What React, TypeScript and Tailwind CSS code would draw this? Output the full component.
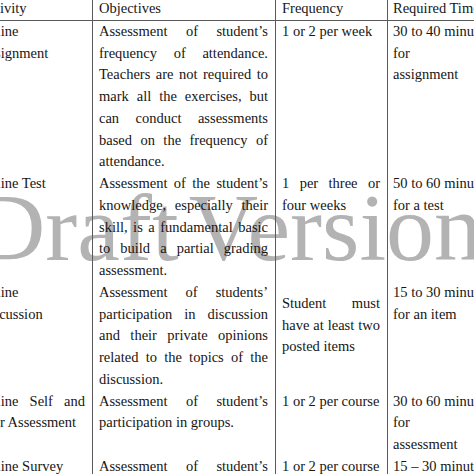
import React from "react";

type Cell = { lines: string[]; justify?: number; pad?: string };
type Row = [Cell, Cell, Cell, Cell];

const HEAD = ["Activity", "Objectives", "Frequency", "Required Time"];

const ROWS: Row[] = [
  [
    { lines: ["Online", "Assignment"] },
    {
      lines: [
        "Assessment of student’s",
        "frequency of attendance.",
        "Teachers are not required to",
        "mark all the exercises, but",
        "can conduct assessments",
        "based on the frequency of",
        "attendance.",
      ],
      justify: 6,
    },
    { lines: ["1 or 2 per week"] },
    { lines: ["30 to 40 minutes", "for", "assignment"] },
  ],
  [
    { lines: ["Online Test"] },
    {
      lines: [
        "Assessment of the student’s",
        "knowledge, especially their",
        "skill, is a fundamental basic",
        "to build a partial grading",
        "assessment.",
      ],
      justify: 4,
    },
    { lines: ["1 per three or", "four weeks"], justify: 1 },
    { lines: ["50 to 60 minutes", "for a test"] },
  ],
  [
    { lines: ["Online", "Discussion"] },
    {
      lines: [
        "Assessment of students’",
        "participation in discussion",
        "and their private opinions",
        "related to the topics of the",
        "discussion.",
      ],
      justify: 4,
    },
    { lines: ["Student must", "have at least two", "posted items"], justify: 2, pad: "pt-[11px]" },
    { lines: ["15 to 30 minutes", "for an item"] },
  ],
  [
    { lines: ["Online Self and", "Peer Assessment"], justify: 1 },
    { lines: ["Assessment of student’s", "participation in groups."], justify: 1 },
    { lines: ["1 or 2 per course"] },
    { lines: ["30 to 60 minutes", "for", "assessment"] },
  ],
  [
    { lines: ["Online Survey"] },
    { lines: ["Assessment of student’s", "opinion about the course."], justify: 1 },
    { lines: ["1 or 2 per course"] },
    { lines: ["15 – 30 minutes", "for a survey"] },
  ],
];

// padding per column, left border on all but the first
const COL_CLASS = [
  "pl-[7px] pr-[7px]",
  "border-l border-[#5a5a5a] pl-[6px] pr-[7px]",
  "border-l border-[#5a5a5a] pl-[6px] pr-[7px]",
  "border-l border-[#5a5a5a] pl-[5px] pr-[7px]",
];

function CellLines({ cell }: { cell: Cell }) {
  const j = cell.justify ?? 0;
  return (
    <>
      {cell.lines.map((line, i) => (
        <div
          key={i}
          className={i < j ? "whitespace-nowrap text-justify [text-align-last:justify]" : "whitespace-nowrap"}
        >
          {line}
        </div>
      ))}
    </>
  );
}

export default function App() {
  return (
    <div className="relative w-[474px] h-[474px] overflow-hidden bg-white">
      {/* watermark */}
      <div
        className="absolute left-[-24px] top-[180px] whitespace-nowrap text-[96px] leading-none text-[#808080]/60 [word-spacing:-12px] select-none"
        style={{ fontFamily: '"Liberation Serif", "Times New Roman", serif' }}
      >
        Draft Version
      </div>

      <div
        className="relative ml-[-28px] mt-[-2px] grid w-[565px] grid-cols-[120px_183px_112px_150px] text-[14.5px] leading-[21.75px] text-[#161616]"
        style={{ fontFamily: '"Liberation Serif", "Times New Roman", serif' }}
      >
        {HEAD.map((h, i) => (
          <div key={h} className={`${COL_CLASS[i]} border-b border-b-[#5a5a5a]`}>
            {h}
          </div>
        ))}
        {ROWS.map((row, r) =>
          row.map((cell, c) => (
            <div key={`${r}-${c}`} className={`${COL_CLASS[c]} ${cell.pad ?? ""}`}>
              <CellLines cell={cell} />
            </div>
          ))
        )}
      </div>
    </div>
  );
}
